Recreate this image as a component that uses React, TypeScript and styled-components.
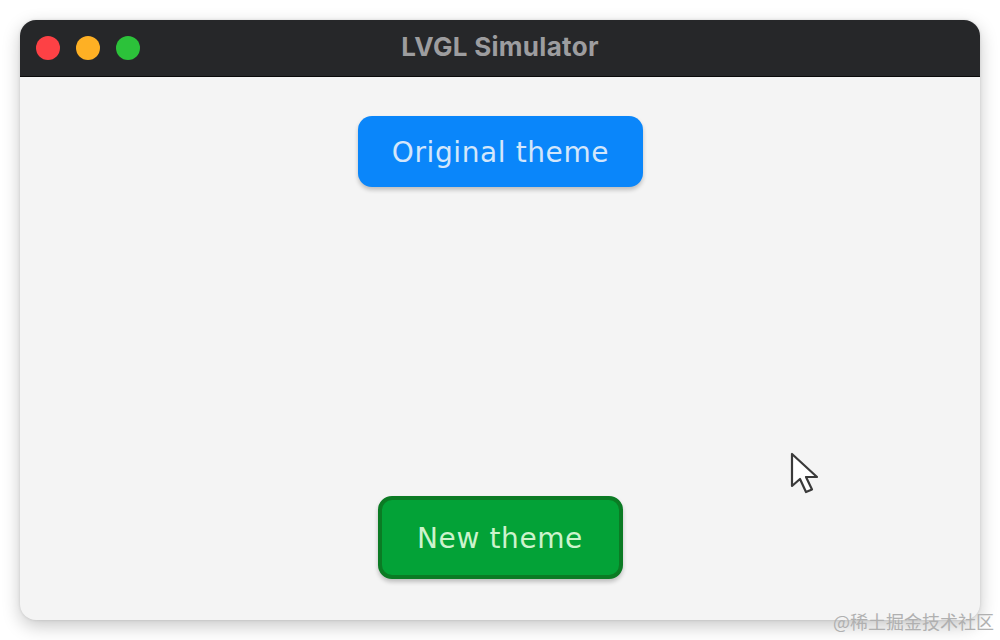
import React from "react";
import styled, { createGlobalStyle } from "styled-components";

const Global = createGlobalStyle`
  html, body { margin: 0; padding: 0; background: #ffffff; }
  body { width: 1000px; height: 640px; overflow: hidden; position: relative; font-family: "Open Sans", "Noto Sans", sans-serif; }
`;

const Page = styled.div`
  width: 1000px;
  height: 640px;
  padding: 20px;
  box-sizing: border-box;
  position: relative;
`;

const Window = styled.div`
  width: 960px;
  height: 600px;
  border-radius: 16px;
  overflow: hidden;
  display: flex;
  flex-direction: column;
  background: #f4f4f4;
  box-shadow: 0 6px 18px rgba(0, 0, 0, 0.22), 0 0 3px rgba(0, 0, 0, 0.12);
`;

const TitleBar = styled.div`
  height: 56px;
  flex: none;
  background: #262729;
  border-bottom: 1px solid #0a0a0a;
  display: flex;
  align-items: center;
  position: relative;
  padding-left: 16px;
  gap: 16px;
`;

const Light = styled.span<{ $color: string }>`
  width: 24px;
  height: 24px;
  border-radius: 50%;
  background: ${(p) => p.$color};
`;

const Title = styled.div`
  position: absolute;
  left: 0;
  right: 0;
  top: 12px;
  line-height: 30px;
  text-align: center;
  font-family: "Inter", "Liberation Sans", sans-serif;
  font-weight: 700;
  font-size: 26px;
  letter-spacing: 0.3px;
  color: #9d9d9f;
  pointer-events: none;
`;

const Content = styled.div`
  flex: 1;
  position: relative;
  display: flex;
  flex-direction: column;
  align-items: center;
  padding-top: 39px;
`;

const Button = styled.div<{ $w: number; $h: number; $bg: string; $fg: string; $border?: string; $mt?: number }>`
  width: ${(p) => p.$w}px;
  height: ${(p) => p.$h}px;
  margin-top: ${(p) => p.$mt ?? 0}px;
  margin-left: ${(p) => (p.$mt ? 0 : 1)}px;
  box-sizing: border-box;
  border-radius: 14px;
  background: ${(p) => p.$bg};
  border: ${(p) => (p.$border ? `4px solid ${p.$border}` : "none")};
  color: ${(p) => p.$fg};
  display: flex;
  align-items: center;
  justify-content: center;
  padding-top: 2px;
  font-family: "DejaVu Sans", "Noto Sans", sans-serif;
  font-size: 28px;
  letter-spacing: 0.6px;
  box-shadow: 0 3px 4px rgba(0, 0, 0, 0.22);
`;

const Cursor = styled.svg`
  position: absolute;
  left: 770px;
  top: 375px;
`;

const Watermark = styled.div`
  position: absolute;
  right: 6px;
  bottom: 6px;
  font-family: "Noto Sans CJK SC", serif;
  font-size: 18px;
  color: #b0b0b0;
`;

export default function App() {
  return (
    <>
      <Global />
      <Page>
        <Window>
          <TitleBar>
            <Light $color="#fd4145" />
            <Light $color="#feb024" />
            <Light $color="#2cc23a" />
            <Title>LVGL Simulator</Title>
          </TitleBar>
          <Content>
            <Button $w={285} $h={71} $bg="#0a86fa" $fg="#d3e6fb">
              Original theme
            </Button>
            <Button $w={245} $h={83} $bg="#03a237" $fg="#ccf3cc" $border="#0b7b24" $mt={309}>
              New theme
            </Button>
            <Cursor width="36" height="46" viewBox="0 0 36 46">
              <path
                d="M2 2 L2 34 L10 27 L16 40 L22 37.5 L16 25 L27 25 Z"
                fill="#ffffff"
                stroke="#3a3a3a"
                strokeWidth="2.2"
                strokeLinejoin="round"
              />
            </Cursor>
          </Content>
        </Window>
        <Watermark>@稀土掘金技术社区</Watermark>
      </Page>
    </>
  );
}
